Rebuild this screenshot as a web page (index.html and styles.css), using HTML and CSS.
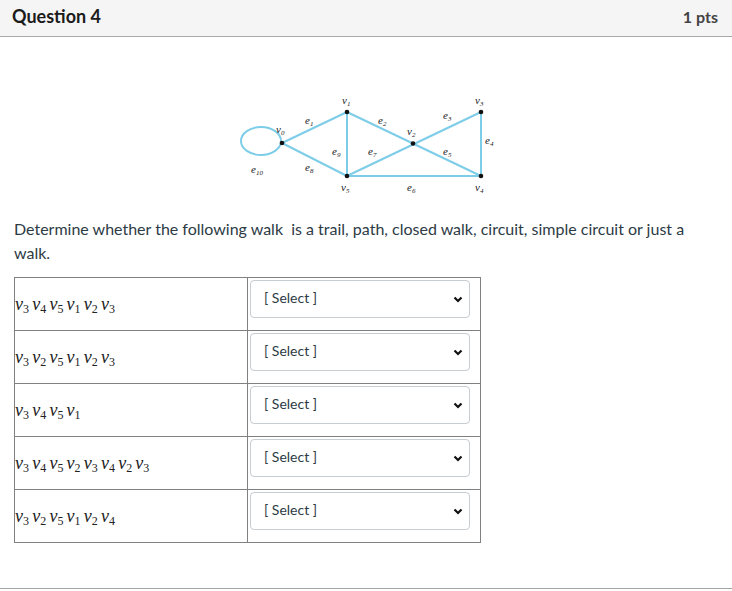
FILE: index.html
```html
<!DOCTYPE html>
<html>
<head>
<meta charset="utf-8">
<link rel="stylesheet" href="styles.css">
</head>
<body>
<div class="question">
  <div class="q-header">
    <span class="q-title">Question 4</span>
    <span class="q-pts">1 pts</span>
  </div>
  <div class="q-body">
    <div class="figure">
      <svg class="graph" width="270" height="120" viewBox="231 80 270 120">
        <g fill="none" stroke="#7dcde8" stroke-width="2">
          <ellipse cx="261" cy="141" rx="20" ry="14"/>
          <line x1="282" y1="143" x2="347" y2="112"/>
          <line x1="282" y1="143" x2="347" y2="176"/>
          <line x1="347" y1="112" x2="347" y2="176"/>
          <line x1="347" y1="112" x2="481" y2="176"/>
          <line x1="347" y1="176" x2="481" y2="112"/>
          <line x1="347" y1="176" x2="481" y2="176"/>
          <line x1="481" y1="112" x2="481" y2="176"/>
        </g>
        <g fill="#111">
          <circle cx="282" cy="143" r="2.3"/>
          <circle cx="347" cy="112" r="2.3"/>
          <circle cx="413" cy="143.5" r="2.3"/>
          <circle cx="481" cy="112" r="2.3"/>
          <circle cx="481" cy="176" r="2.3"/>
          <circle cx="347" cy="176" r="2.3"/>
        </g>
        <g class="lbl">
          <text x="342" y="104">v<tspan class="s" dy="2">1</tspan></text>
          <text x="276" y="133">v<tspan class="s" dy="2">0</tspan></text>
          <text x="407" y="135">v<tspan class="s" dy="2">2</tspan></text>
          <text x="475" y="104">v<tspan class="s" dy="2">3</tspan></text>
          <text x="475" y="191">v<tspan class="s" dy="2">4</tspan></text>
          <text x="341" y="191">v<tspan class="s" dy="2">5</tspan></text>
          <text x="305" y="124">e<tspan class="s" dy="2">1</tspan></text>
          <text x="378" y="124">e<tspan class="s" dy="2">2</tspan></text>
          <text x="443" y="119">e<tspan class="s" dy="2">3</tspan></text>
          <text x="485" y="144">e<tspan class="s" dy="2">4</tspan></text>
          <text x="443" y="155">e<tspan class="s" dy="2">5</tspan></text>
          <text x="407" y="191">e<tspan class="s" dy="2">6</tspan></text>
          <text x="368" y="155">e<tspan class="s" dy="2">7</tspan></text>
          <text x="305" y="171">e<tspan class="s" dy="2">8</tspan></text>
          <text x="332" y="155">e<tspan class="s" dy="2">9</tspan></text>
          <text x="251" y="173">e<tspan class="s" dy="2">10</tspan></text>
        </g>
      </svg>
    </div>
    <p class="prompt">Determine whether the following walk &nbsp;is a trail, path, closed walk, circuit, simple circuit or just a walk.</p>
    <table class="answers">
      <tr>
        <td class="walk"><span class="m">v<sub>3</sub></span><span class="m">v<sub>4</sub></span><span class="m">v<sub>5</sub></span><span class="m">v<sub>1</sub></span><span class="m">v<sub>2</sub></span><span class="m">v<sub>3</sub></span></td>
        <td class="pick"><div class="select"><span>[ Select ]</span><svg width="10" height="7" viewBox="0 0 10 7"><path d="M1.5 1.5 L5 5 L8.5 1.5" fill="none" stroke="#111" stroke-width="2.2"/></svg></div></td>
      </tr>
      <tr>
        <td class="walk"><span class="m">v<sub>3</sub></span><span class="m">v<sub>2</sub></span><span class="m">v<sub>5</sub></span><span class="m">v<sub>1</sub></span><span class="m">v<sub>2</sub></span><span class="m">v<sub>3</sub></span></td>
        <td class="pick"><div class="select"><span>[ Select ]</span><svg width="10" height="7" viewBox="0 0 10 7"><path d="M1.5 1.5 L5 5 L8.5 1.5" fill="none" stroke="#111" stroke-width="2.2"/></svg></div></td>
      </tr>
      <tr>
        <td class="walk"><span class="m">v<sub>3</sub></span><span class="m">v<sub>4</sub></span><span class="m">v<sub>5</sub></span><span class="m">v<sub>1</sub></span></td>
        <td class="pick"><div class="select"><span>[ Select ]</span><svg width="10" height="7" viewBox="0 0 10 7"><path d="M1.5 1.5 L5 5 L8.5 1.5" fill="none" stroke="#111" stroke-width="2.2"/></svg></div></td>
      </tr>
      <tr>
        <td class="walk"><span class="m">v<sub>3</sub></span><span class="m">v<sub>4</sub></span><span class="m">v<sub>5</sub></span><span class="m">v<sub>2</sub></span><span class="m">v<sub>3</sub></span><span class="m">v<sub>4</sub></span><span class="m">v<sub>2</sub></span><span class="m">v<sub>3</sub></span></td>
        <td class="pick"><div class="select"><span>[ Select ]</span><svg width="10" height="7" viewBox="0 0 10 7"><path d="M1.5 1.5 L5 5 L8.5 1.5" fill="none" stroke="#111" stroke-width="2.2"/></svg></div></td>
      </tr>
      <tr>
        <td class="walk"><span class="m">v<sub>3</sub></span><span class="m">v<sub>2</sub></span><span class="m">v<sub>5</sub></span><span class="m">v<sub>1</sub></span><span class="m">v<sub>2</sub></span><span class="m">v<sub>4</sub></span></td>
        <td class="pick"><div class="select"><span>[ Select ]</span><svg width="10" height="7" viewBox="0 0 10 7"><path d="M1.5 1.5 L5 5 L8.5 1.5" fill="none" stroke="#111" stroke-width="2.2"/></svg></div></td>
      </tr>
    </table>
  </div>
  <div class="q-footer"></div>
</div>
</body>
</html>
```
FILE: styles.css
```css
html, body {
  margin: 0;
  padding: 0;
  background: #fff;
}
body {
  font-family: Lato, "Open Sans", sans-serif;
  color: #2d3b45;
}
.q-header {
  background: #f5f5f5;
  border-bottom: 1px solid #a9a9a9;
  display: flex;
  align-items: center;
  justify-content: space-between;
  padding: 0 14px 4px 12px;
  height: 32px;
}
.q-title {
  font-weight: 700;
  font-size: 18px;
  color: #1b1b1b;
}
.q-pts {
  font-weight: 700;
  font-size: 16px;
  color: #444;
}
.q-body {
  padding: 43px 14px 0 14px;
  height: 551px;
  box-sizing: border-box;
}
.figure {
  display: flex;
  justify-content: center;
  height: 120px;
}
.graph {
  display: block;
}
.lbl text {
  font-family: "Liberation Serif", "DejaVu Serif", "Times New Roman", serif;
  font-style: italic;
  font-size: 11px;
  fill: #222;
}
.lbl .s {
  font-size: 7px;
}
.prompt {
  margin: 17px 0 12px 0;
  font-size: 16px;
  line-height: 24px;
  color: #2d3b45;
}
.answers {
  border-collapse: collapse;
  width: 467px;
}
.answers td {
  border: 1px solid #808080;
  height: 53px;
  padding: 0;
  box-sizing: border-box;
}
.walk {
  width: 233px;
  vertical-align: middle;
}
.pick {
  vertical-align: top;
  padding: 2px 10px 0 2px !important;
}
.m {
  font-family: "Liberation Serif", "DejaVu Serif", "Times New Roman", serif;
  font-style: italic;
  font-size: 18px;
  color: #222;
  margin-right: 3.2px;
}
.m sub {
  font-style: normal;
  font-size: 12px;
  vertical-align: -3px;
  line-height: 0;
}
.select {
  height: 38px;
  box-sizing: border-box;
  border: 1px solid #c7cdd1;
  border-radius: 4px;
  display: flex;
  align-items: center;
  justify-content: space-between;
  padding: 0 6px 4px 13px;
  font-size: 14px;
  color: #2d3b45;
  background: #fff;
}
.select svg {
  margin-top: 5px;
}
.q-footer {
  border-top: 1px solid #a5a5a5;
}
```
